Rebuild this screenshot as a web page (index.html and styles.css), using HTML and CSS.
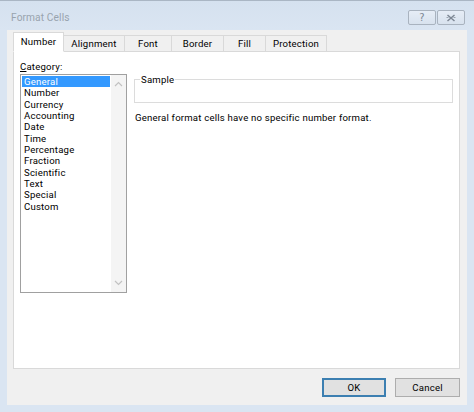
FILE: index.html
```html
<!DOCTYPE html>
<html>
<head>
<meta charset="utf-8">
<link rel="stylesheet" href="styles.css">
</head>
<body>
<div class="window">
  <div class="titlebar">
    <span class="title">Format Cells</span>
    <div class="caption-buttons">
      <button class="cap-btn" aria-label="Help">?</button>
      <button class="cap-btn" aria-label="Close">
        <svg width="10" height="8" viewBox="0 0 10 8"><path d="M1.5 1 L8.5 7 M8.5 1 L1.5 7" stroke="#7d8794" stroke-width="1.5" fill="none"/><path d="M0.5 3.5 H2.5 M7.5 3.5 H9.5" stroke="#9aa4b0" stroke-width="1" fill="none"/></svg>
      </button>
    </div>
  </div>
  <div class="client">
    <div class="tabs">
      <div class="tab active">Number</div>
      <div class="tab">Alignment</div>
      <div class="tab">Font</div>
      <div class="tab">Border</div>
      <div class="tab">Fill</div>
      <div class="tab">Protection</div>
    </div>
    <div class="panel">
      <div class="left-col">
        <div class="label"><u>C</u>ategory:</div>
        <div class="listbox">
          <ul class="items">
            <li class="selected">General</li>
            <li>Number</li>
            <li>Currency</li>
            <li>Accounting</li>
            <li>Date</li>
            <li>Time</li>
            <li>Percentage</li>
            <li>Fraction</li>
            <li>Scientific</li>
            <li>Text</li>
            <li>Special</li>
            <li>Custom</li>
          </ul>
          <div class="scrollbar">
            <svg width="9" height="6" viewBox="0 0 9 6"><path d="M1 5 L4.5 1.5 L8 5" stroke="#c2c2c2" stroke-width="1.2" fill="none"/></svg>
            <svg width="9" height="6" viewBox="0 0 9 6"><path d="M1 1 L4.5 4.5 L8 1" stroke="#c2c2c2" stroke-width="1.2" fill="none"/></svg>
          </div>
        </div>
      </div>
      <div class="right-col">
        <fieldset class="sample">
          <legend>Sample</legend>
        </fieldset>
        <p class="desc">General format cells have no specific number format.</p>
      </div>
    </div>
    <div class="footer">
      <button class="btn default">OK</button>
      <button class="btn">Cancel</button>
    </div>
  </div>
</div>
</body>
</html>
```

FILE: styles.css
```css
html, body {
  margin: 0;
  padding: 0;
}
body {
  font-family: Roboto, "Open Sans", "Liberation Sans", sans-serif;
  font-size: 9.6px;
  letter-spacing: 0.2px;
  color: #000;
  background: #dae5f2;
}
.window {
  width: 474px;
  height: 412px;
  box-sizing: border-box;
  background: #dae5f2;
  border-top: 1px solid #aab6c4;
  padding: 0 7px 7px 7px;
  display: flex;
  flex-direction: column;
}
.titlebar {
  height: 29px;
  display: flex;
  align-items: center;
  justify-content: space-between;
  background: linear-gradient(#d5e1ef, #dae5f2);
  margin: 0 -7px;
  padding: 0 9px 0 11px;
}
.title {
  color: #98a3ae;
  font-size: 10.2px;
  letter-spacing: 0.1px;
  margin-top: 3px;
}
.caption-buttons {
  display: flex;
  gap: 1px;
  margin-top: 4px;
}
.cap-btn {
  width: 28px;
  height: 15px;
  box-sizing: border-box;
  border: 1px solid #a9b3bf;
  border-radius: 2px;
  background: linear-gradient(#e6edf6, #d8e2ee);
  color: #7d8794;
  font-family: "DejaVu Sans", sans-serif;
  font-size: 10px;
  line-height: 12px;
  padding: 0;
  display: flex;
  align-items: center;
  justify-content: center;
}
.client {
  flex: 1;
  background: #f0f0f0;
  padding: 3px 7px 0 6px;
  display: flex;
  flex-direction: column;
}
.tabs {
  display: flex;
  height: 19px;
  align-items: flex-end;
  position: relative;
  z-index: 1;
  margin-bottom: -1px;
}
.tab {
  height: 17px;
  box-sizing: border-box;
  border: 1px solid #d9d9d9;
  border-left: none;
  background: #f0f0f0;
  display: flex;
  align-items: center;
  justify-content: center;
  line-height: 1;
}
.tab:nth-child(1) { width: 51px; }
.tab:nth-child(2) { width: 61px; }
.tab:nth-child(3) { width: 47px; }
.tab:nth-child(4) { width: 52px; }
.tab:nth-child(5) { width: 42px; }
.tab:nth-child(6) { width: 61px; }
.tab.active {
  height: 20px;
  border-left: 1px solid #d9d9d9;
  border-bottom-color: #fff;
  background: #fff;
}
.panel {
  height: 318px;
  box-sizing: border-box;
  background: #fff;
  border: 1px solid #d9d9d9;
  padding: 9px 6px 0 6px;
  display: flex;
  gap: 7px;
}
.left-col {
  width: 107px;
  display: flex;
  flex-direction: column;
}
.label {
  height: 13px;
  line-height: 11px;
}
.label u {
  text-decoration-thickness: 1px;
  text-underline-offset: 1px;
}
.listbox {
  height: 219px;
  box-sizing: border-box;
  border: 1px solid #a0a0a0;
  display: flex;
}
.items {
  flex: 1;
  list-style: none;
  margin: 0;
  padding: 1px 1px 0;
}
.items li {
  height: 11.35px;
  line-height: 11.35px;
  padding-left: 2px;
}
.items li.selected {
  background: #3399ff;
  color: #fff;
}
.scrollbar {
  width: 15px;
  background: #f4f4f4;
  display: flex;
  flex-direction: column;
  justify-content: space-between;
  align-items: center;
  padding: 6px 0 6px;
}
.right-col {
  flex: 1;
  padding-top: 13px;
  width: 319px;
}
.sample {
  margin: 0;
  height: 29px;
  box-sizing: border-box;
  border: 1px solid #dcdcdc;
  padding: 0;
}
.sample legend {
  margin-left: 5px;
  padding: 0 1px;
  line-height: 11px;
}
.desc {
  margin: 9px 0 0 1px;
  line-height: 12px;
}
.footer {
  flex: 1;
  display: flex;
  justify-content: flex-end;
  align-items: flex-start;
  gap: 9px;
  padding-top: 9px;
}
.btn {
  width: 65px;
  height: 19px;
  box-sizing: border-box;
  border: 1px solid #adadad;
  background: #e1e1e1;
  font-family: inherit;
  font-size: 9.6px;
  letter-spacing: 0.2px;
  color: #000;
  padding: 0;
}
.btn.default {
  border: 2px solid #3c7fb1;
  width: 64px;
}
```
